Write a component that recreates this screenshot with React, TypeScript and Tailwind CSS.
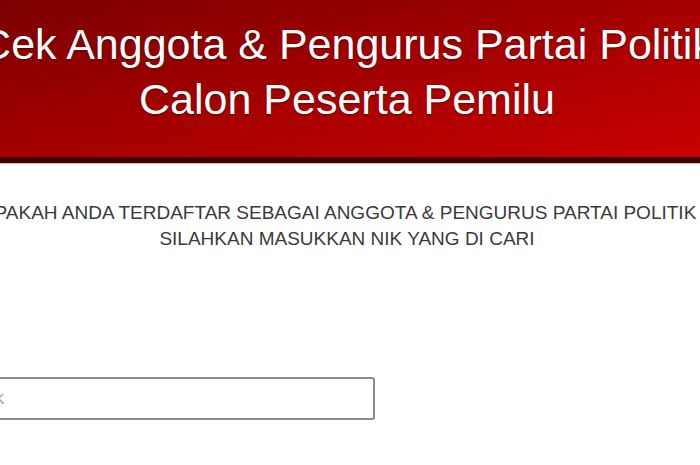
export default function App() {
  return (
    <div
      className="w-[700px] h-[465px] overflow-hidden bg-white flex flex-col"
      style={{ fontFamily: '"Liberation Sans", Arial, sans-serif' }}
    >
      {/* Header */}
      <div className="shrink-0 border-b border-[#d8b8b8]">
        <div className="h-[163px] bg-linear-to-br from-[#7c0000] via-[#a40000] to-[#c80000] border-b-[6px] border-[#3c0000] flex flex-col items-center pt-[17px] pr-[6px]">
          <h1 className="whitespace-nowrap text-white text-[43px] leading-[55px] [text-shadow:0_1px_2px_rgba(60,0,0,0.6)]">
            Cek Anggota &amp; Pengurus Partai Politik
          </h1>
          <h1 className="whitespace-nowrap text-white text-[43px] leading-[55px] [text-shadow:0_1px_2px_rgba(60,0,0,0.6)]">
            Calon Peserta Pemilu
          </h1>
        </div>
      </div>

      {/* Body */}
      <div className="flex flex-col items-center pt-[36px] pr-[6px] text-[#3a3a3a] text-[19px] leading-[26px]">
        <p className="whitespace-nowrap">APAKAH ANDA TERDAFTAR SEBAGAI ANGGOTA &amp; PENGURUS PARTAI POLITIK ?</p>
        <p className="whitespace-nowrap">SILAHKAN MASUKKAN NIK YANG DI CARI</p>
      </div>

      <div className="mt-[125px] -ml-[110px]">
        <input
          type="text"
          placeholder="Masukkan NIK"
          className="w-[485px] h-[43px] border-2 border-[#8c8c8c] rounded-[3px] pl-[15px] text-[15px] text-[#333] placeholder:text-[#999] outline-none bg-white"
        />
      </div>
    </div>
  );
}
